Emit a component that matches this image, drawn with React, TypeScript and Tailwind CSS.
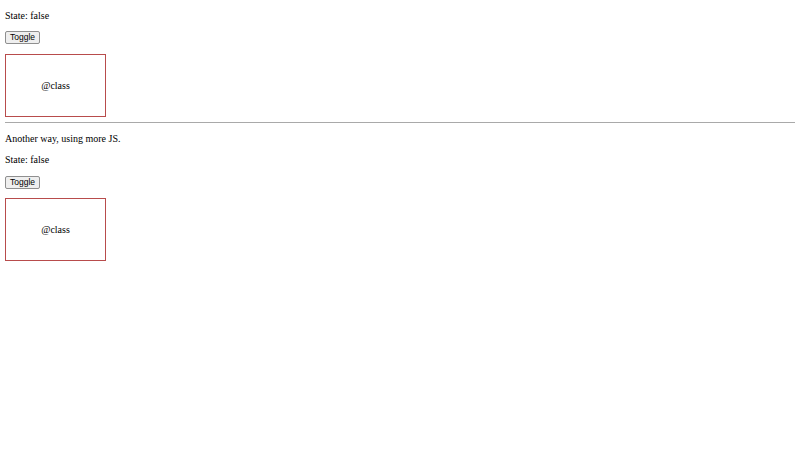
import { useState } from "react";

function ClassBox({ on }: { on: boolean }) {
  return (
    <div
      className={
        on
          ? "flex h-[63px] w-[101px] items-center justify-center border border-[#4a6fb8] pt-[2px]"
          : "flex h-[63px] w-[101px] items-center justify-center border border-[#b84c4c] pt-[2px]"
      }
    >
      @class
    </div>
  );
}

function ToggleButton({ onClick }: { onClick: () => void }) {
  return (
    <button
      onClick={onClick}
      className="flex h-[13px] items-center rounded-[2px] border border-[#8f8f8f] bg-[#efefef] px-[4px] font-['Liberation_Sans',Arial,sans-serif] text-[8.5px] leading-none text-black"
    >
      Toggle
    </button>
  );
}

export default function App() {
  const [first, setFirst] = useState(false);
  const [second, setSecond] = useState(false);

  return (
    <div className="min-h-screen bg-white px-[5px] pt-[10px] font-['Liberation_Serif','Times_New_Roman',serif] text-[10px] leading-[11.5px] text-black">
      {/* first way */}
      <p>State: {String(first)}</p>
      <div className="mt-[9px]">
        <ToggleButton onClick={() => setFirst((v) => !v)} />
      </div>
      <div className="mt-[10px]">
        <ClassBox on={first} />
      </div>

      <hr className="mt-[5px] border-t border-[#a9a9a9]" />

      {/* second way */}
      <p className="mt-[10px]">Another way, using more JS.</p>
      <p className="mt-[10px]">State: {String(second)}</p>
      <div className="mt-[10px]">
        <ToggleButton onClick={() => setSecond((v) => !v)} />
      </div>
      <div className="mt-[9px]">
        <ClassBox on={second} />
      </div>
    </div>
  );
}
